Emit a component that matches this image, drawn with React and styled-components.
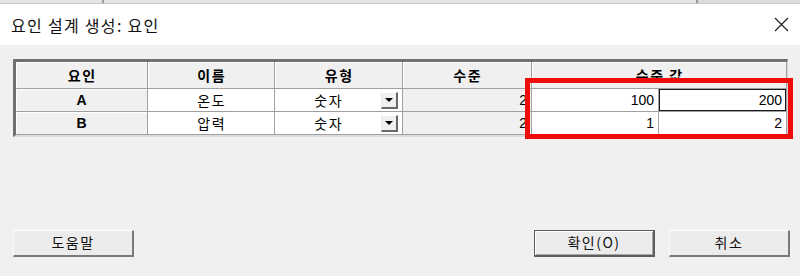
import React from "react";
import styled, { createGlobalStyle, css } from "styled-components";

const GlobalStyle = createGlobalStyle`
  html, body {
    margin: 0;
    padding: 0;
    background: #f0f0f0;
  }
  body {
    font-family: "Liberation Sans", "Noto Sans CJK KR", sans-serif;
    color: #000;
  }
`;

const Window = styled.div`
  width: 800px;
  height: 276px;
  display: flex;
  flex-direction: column;
  overflow: hidden;
`;

/* the window behind the dialog peeks out above it */
const BackStrip = styled.div`
  height: 3px;
  flex: none;
  border-bottom: 1px solid #c8c8c8;
  background: linear-gradient(
    to right,
    #e4e4e4 0 102px,
    #9a9a9a 102px 104px,
    #e4e4e4 104px 696px,
    #9a9a9a 696px 698px,
    #dcdcdc 698px
  );
`;

const TitleBar = styled.div`
  height: 41px;
  flex: none;
  background: #fff;
  display: flex;
  align-items: center;
  justify-content: space-between;
  padding: 0 9px 0 11px;
`;

const Title = styled.span`
  font-family: "Noto Sans CJK KR", sans-serif;
  font-size: 16px;
  letter-spacing: 1.3px;
  line-height: 1;
  color: #111;
  padding-top: 1px;
`;

const CloseButton = styled.button`
  width: 20px;
  height: 20px;
  padding: 0;
  border: 0;
  background: none;
  display: flex;
  align-items: center;
  justify-content: center;
`;

const Body = styled.div`
  flex: 1;
  position: relative;
  display: flex;
  flex-direction: column;
  padding: 14px 10px 19px 13px;
`;

/* ---------------------------- grid ---------------------------- */

const GridFrame = styled.div`
  width: 771px;
  border-style: solid;
  border-width: 3px 1px 2px 3px;
  border-color: #707070 #d4d4d4 #dcdcdc #707070;
  background: #f0f0f0;
`;

const Grid = styled.div`
  display: grid;
  grid-template-columns: 132px 127px 128px 129px 127px 128px;
  grid-template-rows: 27px 23px 23px;
`;

const headerLook = css`
  background: #f0f0f0;
  box-shadow: inset 1px 1px 0 #fff;
  font-weight: bold;
  justify-content: center;
`;

const Cell = styled.div`
  display: flex;
  align-items: center;
  box-sizing: border-box;
  border-right: 1px solid #a0a0a0;
  border-bottom: 1px solid #a0a0a0;
  font-size: 14px;
  line-height: 1;
  padding: 0 4px;
  background: ${({ $readonly }) => ($readonly ? "#f0f0f0" : "#fff")};
  justify-content: ${({ $align }) =>
    $align === "right" ? "flex-end" : "center"};
  grid-column: ${({ $span }) => ($span ? `span ${$span}` : "auto")};
  ${({ $header }) => $header && headerLook}
  ${({ $focus }) =>
    $focus &&
    css`
      box-shadow: inset 0 0 0 1px #1a1a1a;
    `}
`;

const HangulText = styled.span`
  font-family: "Noto Sans CJK KR", sans-serif;
  font-size: 14px;
  letter-spacing: 1.5px;
  margin-right: -1.5px;
`;

const ComboCell = styled(Cell)`
  padding: 0 4px 0 0;
  justify-content: space-between;
`;

const ComboValue = styled(HangulText)`
  flex: 1;
  text-align: center;
`;

const DropButton = styled.span`
  width: 17px;
  height: 17px;
  box-sizing: border-box;
  background: #f0f0f0;
  border-style: solid;
  border-width: 1px 2px 2px 1px;
  border-color: #fff #6a6a6a #6a6a6a #e8e8e8;
  display: flex;
  align-items: center;
  justify-content: center;
  margin-top: 1px;

  &::after {
    content: "";
    border-left: 4px solid transparent;
    border-right: 4px solid transparent;
    border-top: 4px solid #000;
  }
`;

/* annotation drawn over the level values */
const Highlight = styled.div`
  position: absolute;
  left: 525px;
  top: 33px;
  width: 268px;
  height: 61px;
  box-sizing: border-box;
  border: 5px solid #f00a0a;
  pointer-events: none;
`;

/* ---------------------------- buttons ---------------------------- */

const ButtonRow = styled.div`
  margin-top: auto;
  display: flex;
  align-items: center;
  gap: 14px;
`;

const Spacer = styled.div`
  flex: 1;
`;

const Button = styled.button`
  width: 121px;
  height: 27px;
  box-sizing: border-box;
  background: #ececec;
  font-family: "Noto Sans CJK KR", sans-serif;
  font-size: 14px;
  letter-spacing: 1.5px;
  line-height: 1;
  color: #111;
  padding: 0 0 2px;
  border-style: solid;
  border-width: 1px 2px 2px 1px;
  border-color: #fff #7a7a7a #7a7a7a #fafafa;
  ${({ $default }) =>
    $default &&
    css`
      border-color: #5c5c5c;
      border-width: 1px 2px 2px 1px;
      box-shadow: inset 1px 1px 0 #fff, inset -1px -1px 0 #a8a8a8;
    `}
`;

const rows = [
  { label: "A", name: "온도", type: "숫자", levels: 2, values: [100, 200] },
  { label: "B", name: "압력", type: "숫자", levels: 2, values: [1, 2] },
];

export default function App() {
  return (
    <Window>
      <GlobalStyle />
      <BackStrip />
      <TitleBar>
        <Title>요인 설계 생성: 요인</Title>
        <CloseButton aria-label="닫기">
          <svg width="15" height="15" viewBox="0 0 15 15">
            <path
              d="M1 1 L14 14 M14 1 L1 14"
              stroke="#222"
              strokeWidth="1.2"
              fill="none"
            />
          </svg>
        </CloseButton>
      </TitleBar>
      <Body>
        <GridFrame>
          <Grid>
            <Cell $header>
              <HangulText>요인</HangulText>
            </Cell>
            <Cell $header>
              <HangulText>이름</HangulText>
            </Cell>
            <Cell $header>
              <HangulText>유형</HangulText>
            </Cell>
            <Cell $header>
              <HangulText>수준</HangulText>
            </Cell>
            <Cell $header $span={2}>
              <HangulText>수준 값</HangulText>
            </Cell>
            {rows.map((row, r) => (
              <React.Fragment key={row.label}>
                <Cell $header>{row.label}</Cell>
                <Cell>
                  <HangulText>{row.name}</HangulText>
                </Cell>
                <ComboCell>
                  <ComboValue>{row.type}</ComboValue>
                  <DropButton />
                </ComboCell>
                <Cell $readonly $align="right">
                  {row.levels}
                </Cell>
                {row.values.map((v, i) => (
                  <Cell
                    key={i}
                    $align="right"
                    $focus={r === 0 && i === 1}
                  >
                    {v}
                  </Cell>
                ))}
              </React.Fragment>
            ))}
          </Grid>
        </GridFrame>
        <Highlight />
        <ButtonRow>
          <Button>도움말</Button>
          <Spacer />
          <Button $default>확인(O)</Button>
          <Button>취소</Button>
        </ButtonRow>
      </Body>
    </Window>
  );
}
